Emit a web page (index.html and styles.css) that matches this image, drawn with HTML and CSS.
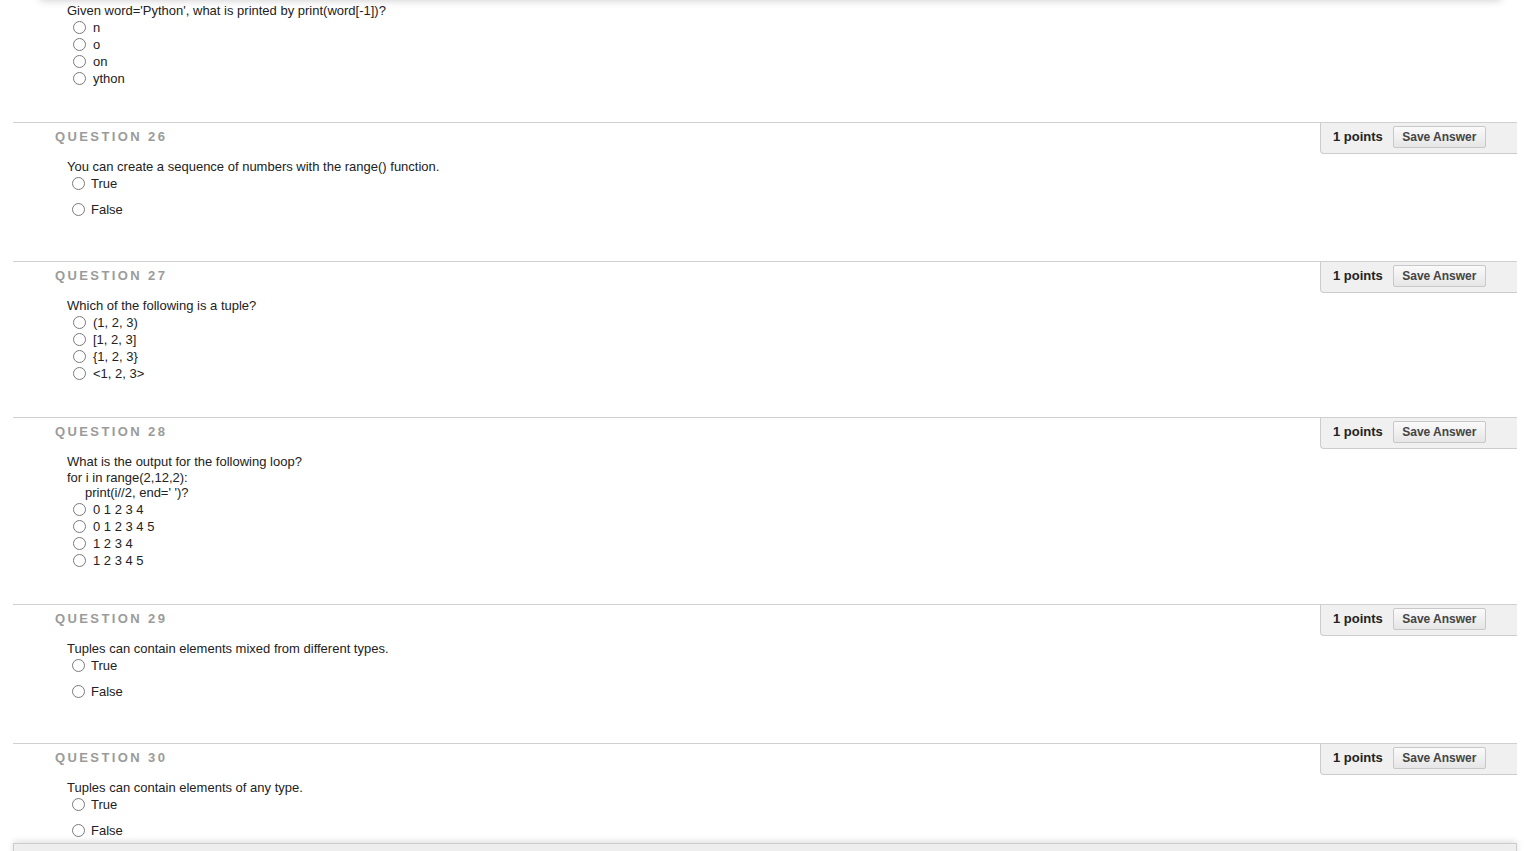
FILE: index.html
```html
<!DOCTYPE html>
<html>
<head>
<meta charset="utf-8">
<link rel="stylesheet" href="styles.css">
</head>
<body>
<div class="topbar"></div>
<div class="page">
  <div class="q q-first">
    <div class="q-body">
      <div class="q-text">Given word='Python', what is printed by print(word[-1])?</div>
      <ul class="opts">
        <li><span class="radio"></span><span>n</span></li>
        <li><span class="radio"></span><span>o</span></li>
        <li><span class="radio"></span><span>on</span></li>
        <li><span class="radio"></span><span>ython</span></li>
      </ul>
    </div>
  </div>

  <div class="q">
    <div class="q-head">
      <div class="q-title">QUESTION 26</div>
      <div class="q-points"><span class="pts">1 points</span><button class="save">Save Answer</button></div>
    </div>
    <div class="q-body">
      <div class="q-text">You can create a sequence of numbers with the range() function.</div>
      <ul class="opts tf">
        <li><span class="radio"></span><span>True</span></li>
        <li><span class="radio"></span><span>False</span></li>
      </ul>
    </div>
  </div>

  <div class="q">
    <div class="q-head">
      <div class="q-title">QUESTION 27</div>
      <div class="q-points"><span class="pts">1 points</span><button class="save">Save Answer</button></div>
    </div>
    <div class="q-body">
      <div class="q-text">Which of the following is a tuple?</div>
      <ul class="opts">
        <li><span class="radio"></span><span>(1, 2, 3)</span></li>
        <li><span class="radio"></span><span>[1, 2, 3]</span></li>
        <li><span class="radio"></span><span>{1, 2, 3}</span></li>
        <li><span class="radio"></span><span>&lt;1, 2, 3&gt;</span></li>
      </ul>
    </div>
  </div>

  <div class="q">
    <div class="q-head">
      <div class="q-title">QUESTION 28</div>
      <div class="q-points"><span class="pts">1 points</span><button class="save">Save Answer</button></div>
    </div>
    <div class="q-body">
      <div class="q-text multi">What is the output for the following loop?<br>for i in range(2,12,2):<br><span class="indent">print(i//2, end=' ')?</span></div>
      <ul class="opts">
        <li><span class="radio"></span><span>0 1 2 3 4</span></li>
        <li><span class="radio"></span><span>0 1 2 3 4 5</span></li>
        <li><span class="radio"></span><span>1 2 3 4</span></li>
        <li><span class="radio"></span><span>1 2 3 4 5</span></li>
      </ul>
    </div>
  </div>

  <div class="q">
    <div class="q-head">
      <div class="q-title">QUESTION 29</div>
      <div class="q-points"><span class="pts">1 points</span><button class="save">Save Answer</button></div>
    </div>
    <div class="q-body">
      <div class="q-text">Tuples can contain elements mixed from different types.</div>
      <ul class="opts tf">
        <li><span class="radio"></span><span>True</span></li>
        <li><span class="radio"></span><span>False</span></li>
      </ul>
    </div>
  </div>

  <div class="q">
    <div class="q-head">
      <div class="q-title">QUESTION 30</div>
      <div class="q-points"><span class="pts">1 points</span><button class="save">Save Answer</button></div>
    </div>
    <div class="q-body">
      <div class="q-text">Tuples can contain elements of any type.</div>
      <ul class="opts tf">
        <li><span class="radio"></span><span>True</span></li>
        <li><span class="radio"></span><span>False</span></li>
      </ul>
    </div>
  </div>
</div>
<div class="footer"></div>
</body>
</html>
```

FILE: styles.css
```css
html, body {
  margin: 0;
  padding: 0;
  background: #fff;
}
body {
  font-family: "Liberation Sans", Arial, sans-serif;
  font-size: 13px;
  line-height: 17px;
  color: #222;
}
.topbar {
  position: fixed;
  top: -20px;
  left: 40px;
  right: 30px;
  height: 20px;
  box-shadow: 0 0 8px rgba(0,0,0,0.22);
  background: #fff;
}
.page {
  margin: 0 14px 0 13px;
}
.q {
  border-top: 1px solid #d0d0d0;
}
.q-first {
  border-top: none;
  padding-top: 2px;
}
.q-first .q-body {
  padding-top: 0;
}
.q-head {
  display: flex;
  align-items: flex-start;
  height: 34px;
}
.q-title {
  padding: 5px 0 0 42px;
  font-weight: bold;
  color: #9b9b9b;
  letter-spacing: 2.4px;
}
.q-points {
  margin-left: auto;
  width: 184px;
  height: 30px;
  background: #f0f0f0;
  border-left: 1px solid #ccc;
  border-bottom: 1px solid #ccc;
  border-bottom-left-radius: 4px;
  display: flex;
  align-items: center;
  padding-left: 12px;
  box-sizing: content-box;
}
.pts {
  font-weight: bold;
  color: #222;
  margin-top: -4px;
}
.save {
  margin-left: 10px;
  margin-top: -2px;
  height: 22px;
  width: 93px;
  padding: 0;
  font-family: "Liberation Sans", Arial, sans-serif;
  font-size: 12px;
  font-weight: bold;
  color: #444;
  background: linear-gradient(#fafafa, #e6e6e6);
  border: 1px solid #c8c8c8;
  border-radius: 2px;
}
.q-body {
  padding: 1px 0 35px 54px;
}
.q-text {
  line-height: 16px;
  padding-top: 1px;
}
.q-text.multi {
  line-height: 15.5px;
  margin-bottom: 0.5px;
}
.q-text .indent {
  padding-left: 18px;
}
.opts {
  list-style: none;
  margin: 0;
  padding: 0 0 0 6px;
}
.opts li {
  display: flex;
  align-items: center;
  height: 17px;
}
.radio {
  width: 13px;
  height: 13px;
  box-sizing: border-box;
  border: 1px solid #7a7a7a;
  border-radius: 50%;
  background: #fff;
  margin-right: 7px;
  flex: none;
}
.opts.tf {
  padding-left: 5px;
}
.opts.tf li {
  margin-bottom: 9px;
}
.opts.tf li:last-child {
  margin-bottom: 8px;
}
.opts.tf .radio {
  margin-right: 6px;
}
.footer {
  position: fixed;
  left: 13px;
  right: 14px;
  bottom: -20px;
  height: 26px;
  background: #eee;
  border: 1px solid #ccc;
  box-shadow: 0 -2px 6px rgba(0,0,0,0.12);
}
```
